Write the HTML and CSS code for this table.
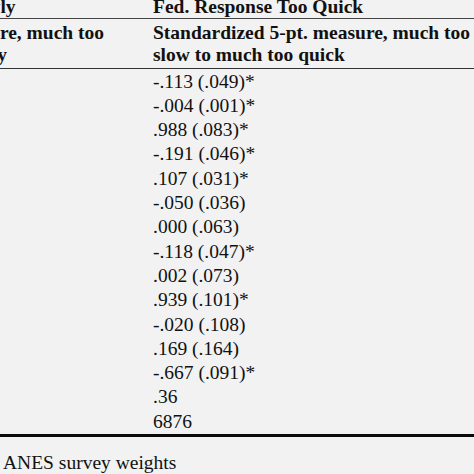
FILE: index.html
```html
<!DOCTYPE html>
<html>
<head>
<meta charset="utf-8">
<link rel="stylesheet" href="styles.css">
</head>
<body>
<div class="page">
  <div class="table">
    <div class="row head1">
      <div class="cell shift-a">Fed. Response Too Slowly</div>
      <div class="cell">Fed. Response Too Quick</div>
    </div>
    <div class="row head2">
      <div class="cell">
        <div>Standardized 5-pt. measure, much too</div>
        <div class="shift-b">quick to much too slowly</div>
      </div>
      <div class="cell">
        <div>Standardized 5-pt. measure, much too</div>
        <div>slow to much too quick</div>
      </div>
    </div>
    <div class="body">
      <div class="row"><div class="cell"></div><div class="cell">-.113 (.049)*</div></div>
      <div class="row"><div class="cell"></div><div class="cell">-.004 (.001)*</div></div>
      <div class="row"><div class="cell"></div><div class="cell">.988 (.083)*</div></div>
      <div class="row"><div class="cell"></div><div class="cell">-.191 (.046)*</div></div>
      <div class="row"><div class="cell"></div><div class="cell">.107 (.031)*</div></div>
      <div class="row"><div class="cell"></div><div class="cell">-.050 (.036)</div></div>
      <div class="row"><div class="cell"></div><div class="cell">.000 (.063)</div></div>
      <div class="row"><div class="cell"></div><div class="cell">-.118 (.047)*</div></div>
      <div class="row"><div class="cell"></div><div class="cell">.002 (.073)</div></div>
      <div class="row"><div class="cell"></div><div class="cell">.939 (.101)*</div></div>
      <div class="row"><div class="cell"></div><div class="cell">-.020 (.108)</div></div>
      <div class="row"><div class="cell"></div><div class="cell">.169 (.164)</div></div>
      <div class="row"><div class="cell"></div><div class="cell">-.667 (.091)*</div></div>
      <div class="row"><div class="cell"></div><div class="cell">.36</div></div>
      <div class="row"><div class="cell"></div><div class="cell">6876</div></div>
    </div>
  </div>
  <p class="note">ANES survey weights</p>
</div>
</body>
</html>
```
FILE: styles.css
```css
html, body {
  margin: 0;
  padding: 0;
  background: #f2f2f2;
}
body {
  font-family: "Liberation Serif", "Times New Roman", serif;
  font-size: 19.5px;
  color: #111;
  overflow: hidden;
  width: 474px;
  height: 474px;
}
.page {
  margin-left: -213px;
  margin-top: -4.4px;
  width: 687px;
}
.row {
  display: grid;
  grid-template-columns: 366px 1fr;
}
.cell {
  white-space: nowrap;
}
.shift-a {
  padding-left: 14px;
}
.shift-b {
  padding-left: 13px;
}
.head1 {
  font-weight: bold;
  line-height: 22.6px;
  border-bottom: 1px solid #444;
}
.head2 {
  font-weight: bold;
  line-height: 22.4px;
  padding-top: 2.3px;
  padding-bottom: 1.7px;
  border-bottom: 1px solid #333;
}
.body {
  padding-top: 0.6px;
  border-bottom: 3px solid #0a0a0a;
}
.body .row {
  line-height: 24.3px;
}
.note {
  margin: 15px 0 0 216px;
  line-height: 22.6px;
}
```
